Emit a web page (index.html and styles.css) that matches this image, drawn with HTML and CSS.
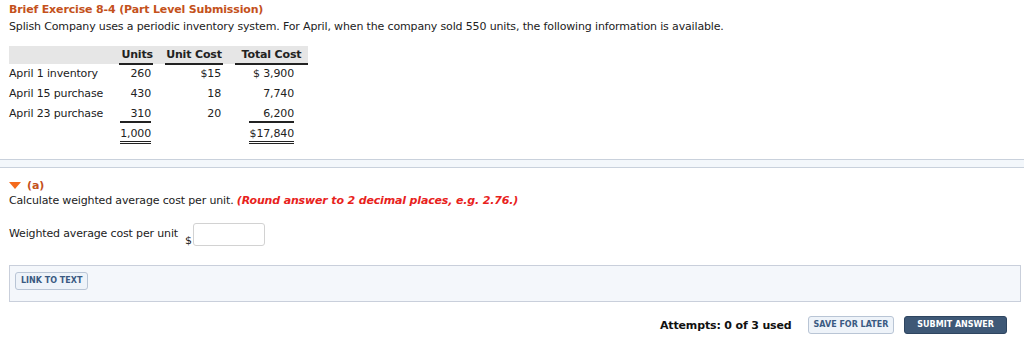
FILE: index.html
```html
<!DOCTYPE html>
<html>
<head>
<meta charset="utf-8">
<link rel="stylesheet" href="styles.css">
</head>
<body>
<div class="top">
  <div class="title">Brief Exercise 8-4 (Part Level Submission)</div>
  <div class="intro">Splish Company uses a periodic inventory system. For April, when the company sold 550 units, the following information is available.</div>
  <table class="inv">
    <thead>
      <tr>
        <th class="lbl"></th>
        <th class="c-units"><span class="hd">Units</span></th>
        <th class="c-cost"><span class="hd">Unit Cost</span></th>
        <th class="c-total"><span class="hd">Total Cost</span></th>
      </tr>
    </thead>
    <tbody>
      <tr><td class="lbl">April 1 inventory</td><td class="c-units">260</td><td class="c-cost">$15</td><td class="c-total">$ 3,900</td></tr>
      <tr><td class="lbl">April 15 purchase</td><td class="c-units">430</td><td class="c-cost">18</td><td class="c-total">7,740</td></tr>
      <tr><td class="lbl">April 23 purchase</td><td class="c-units"><span class="u-units single">310</span></td><td class="c-cost">20</td><td class="c-total"><span class="u-total single">6,200</span></td></tr>
      <tr><td class="lbl"></td><td class="c-units"><span class="u-units double">1,000</span></td><td class="c-cost"></td><td class="c-total"><span class="u-total double">$17,840</span></td></tr>
    </tbody>
  </table>
</div>
<div class="sep"></div>
<div class="part">
  <div class="part-head"><span class="tri"></span><span class="part-label">(a)</span></div>
  <div class="instr">Calculate weighted average cost per unit. <span class="note">(Round answer to 2 decimal places, e.g. 2.76.)</span></div>
  <div class="answer">
    <span class="ans-label">Weighted average cost per unit</span>
    <span class="dollar">$</span>
    <input class="ans-input" type="text">
  </div>
  <div class="linkbox"><button class="btn-light">LINK TO TEXT</button></div>
  <div class="footer">
    <span class="attempts">Attempts: 0 of 3 used</span>
    <button class="btn-light btn-save">SAVE FOR LATER</button>
    <button class="btn-dark">SUBMIT ANSWER</button>
  </div>
</div>
</body>
</html>
```
FILE: styles.css
```css
html, body {
  margin: 0;
  padding: 0;
  background: #fff;
}
body {
  font-family: "DejaVu Sans", Verdana, sans-serif;
  font-size: 11px;
  letter-spacing: -0.15px;
  color: #222;
}
.top {
  padding: 2px 9px 0 9px;
}
.title {
  color: #c4511b;
  font-weight: bold;
  font-size: 11px;
  line-height: 16px;
}
.intro {
  line-height: 16px;
  margin-top: 1px;
}
.inv {
  border-collapse: collapse;
  margin-top: 11px;
}
.inv th {
  background: #e6e6e6;
  height: 18px;
  padding: 0;
  font-weight: bold;
  vertical-align: top;
}
.inv th .hd {
  display: block;
  line-height: 17px;
  border-bottom: 2px solid #222;
  margin-bottom: -1px;
}
.inv td {
  height: 20px;
  padding: 0;
  line-height: 20px;
  white-space: nowrap;
}
.inv .lbl {
  width: 110px;
  text-align: left;
}
.inv .c-units { text-align: right; }
.inv .c-cost { text-align: right; }
.inv .c-total { text-align: right; }
.inv th.c-units .hd { width: 34px; text-align: right; }
.inv th.c-cost { padding-left: 12px; }
.inv th.c-cost .hd { width: 58px; text-align: center; }
.inv th.c-total { padding-left: 12px; }
.inv th.c-total .hd { width: 73px; text-align: center; }
.inv td.c-units { padding-right: 2px; }
.inv td.c-cost { padding-right: 2px; }
.inv td.c-total { padding-right: 14px; }
.u-units, .u-total {
  display: inline-block;
  text-align: right;
  line-height: 15px;
}
.u-units { width: 31px; }
.u-total { width: 45px; }
.single { border-bottom: 2px solid #222; }
.double { border-bottom: 3px double #222; }
.sep {
  margin-top: 15px;
  height: 7px;
  border-top: 1px solid #c9d1dc;
  border-bottom: 1px solid #c9d1dc;
  background: #f3f7fb;
}
.part {
  padding: 0 3px 0 9px;
}
.part-head {
  display: flex;
  align-items: center;
  margin-top: 10px;
  height: 14px;
}
.tri {
  width: 0;
  height: 0;
  border-left: 6px solid transparent;
  border-right: 6px solid transparent;
  border-top: 7px solid #f46a1d;
  margin-right: 6px;
}
.part-label {
  color: #c4511b;
  font-weight: bold;
  font-size: 11px;
}
.instr {
  line-height: 16px;
  margin-top: 1px;
}
.note {
  color: #e8221c;
  font-weight: bold;
  font-style: italic;
}
.answer {
  display: flex;
  align-items: flex-start;
  margin-top: 14px;
  height: 24px;
}
.ans-label {
  margin-top: 4px;
}
.dollar {
  margin-left: 7px;
  margin-top: 11px;
  margin-right: 1px;
}
.ans-input {
  width: 72px;
  height: 23px;
  box-sizing: border-box;
  border: 1px solid #d2d2d2;
  border-radius: 3px;
  padding: 0;
  margin: 0;
  background: #fff;
}
.linkbox {
  margin-top: 18px;
  height: 37px;
  border: 1px solid #c9cfdb;
  background: #f4f7fb;
  padding: 6px 5px 0;
  box-sizing: border-box;
}
.btn-light, .btn-dark {
  font-family: "DejaVu Sans", Verdana, sans-serif;
  font-size: 8px;
  font-weight: bold;
  height: 18px;
  padding: 0 5px;
  border-radius: 3px;
  cursor: pointer;
  line-height: 16px;
  letter-spacing: 0;
}
.btn-light {
  background: #eef3f9;
  border: 1px solid #b9c5d5;
  color: #3a5a82;
}
.btn-dark {
  background: #3e5876;
  border: 1px solid #2e4560;
  color: #fff;
  padding: 0 12px;
}
.footer {
  display: flex;
  justify-content: flex-end;
  align-items: center;
  margin-top: 14px;
  padding-right: 14px;
  gap: 10px;
}
.attempts {
  font-weight: bold;
  font-size: 11px;
  color: #111;
  margin-right: 6px;
}
```
